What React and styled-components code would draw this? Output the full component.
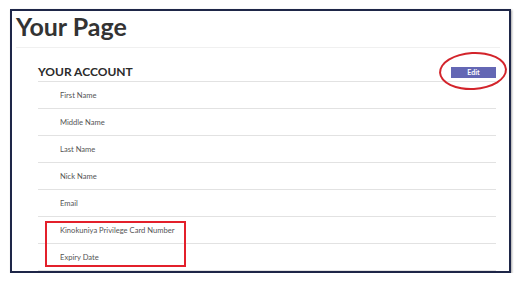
import styled, { createGlobalStyle } from "styled-components";

const GlobalStyle = createGlobalStyle`
  html, body {
    margin: 0;
    padding: 0;
    background: #ffffff;
  }
  body {
    font-family: Lato, "Liberation Sans", sans-serif;
  }
`;

const Frame = styled.div`
  position: relative;
  box-sizing: border-box;
  margin: 9px 0 0 10px;
  width: 501px;
  height: 264px;
  border: 2px solid #1e2648;
  box-shadow: 1px 1px 2px rgba(0, 0, 0, 0.35);
  padding: 0 9px 0 4px;
  overflow: hidden;
  background: #ffffff;
`;

const PageTitle = styled.h1`
  margin: 0;
  padding: 0 0 6px;
  font-size: 25px;
  line-height: 30px;
  font-weight: 700;
  color: #333333;
  border-bottom: 1px solid #f0f0f0;
`;

const Account = styled.section`
  margin: 0 4px 0 22px;
`;

const AccountHeader = styled.div`
  display: flex;
  align-items: center;
  justify-content: space-between;
  margin-top: 17px;
  padding-bottom: 2px;
  border-bottom: 1px solid #e2e2e2;
`;

const AccountTitle = styled.h2`
  margin: 0;
  font-size: 12px;
  line-height: 14px;
  font-weight: 700;
  color: #2b2b2b;
`;

const EditButton = styled.button`
  width: 45px;
  height: 11px;
  padding: 0;
  border: none;
  background: #6467b4;
  color: #ffffff;
  font-family: Lato, "Liberation Sans", sans-serif;
  font-size: 7px;
  font-weight: 700;
  line-height: 11px;
`;

const Field = styled.div`
  height: 26px;
  line-height: 26px;
  padding-left: 22px;
  font-size: 7.6px;
  color: #555555;
  border-bottom: 1px solid #e2e2e2;
`;

const Ellipse = styled.div`
  position: absolute;
  left: 427px;
  top: 41px;
  width: 68px;
  height: 38px;
  box-sizing: border-box;
  border: 2px solid #d3242b;
  border-radius: 50%;
  transform: rotate(-3deg);
  pointer-events: none;
`;

const Highlight = styled.div`
  position: absolute;
  left: 33px;
  top: 210px;
  width: 141px;
  height: 46px;
  box-sizing: border-box;
  border: 2px solid #e3202b;
  pointer-events: none;
`;

const fields = [
  "First Name",
  "Middle Name",
  "Last Name",
  "Nick Name",
  "Email",
  "Kinokuniya Privilege Card Number",
  "Expiry Date",
];

const App = () => {
  return (
    <>
      <GlobalStyle />
      <Frame>
        <PageTitle>Your Page</PageTitle>
        <Account>
          <AccountHeader>
            <AccountTitle>YOUR ACCOUNT</AccountTitle>
            <EditButton>Edit</EditButton>
          </AccountHeader>
          {fields.map((label) => (
            <Field key={label}>{label}</Field>
          ))}
        </Account>
        <Ellipse />
        <Highlight />
      </Frame>
    </>
  );
};

export default App;
